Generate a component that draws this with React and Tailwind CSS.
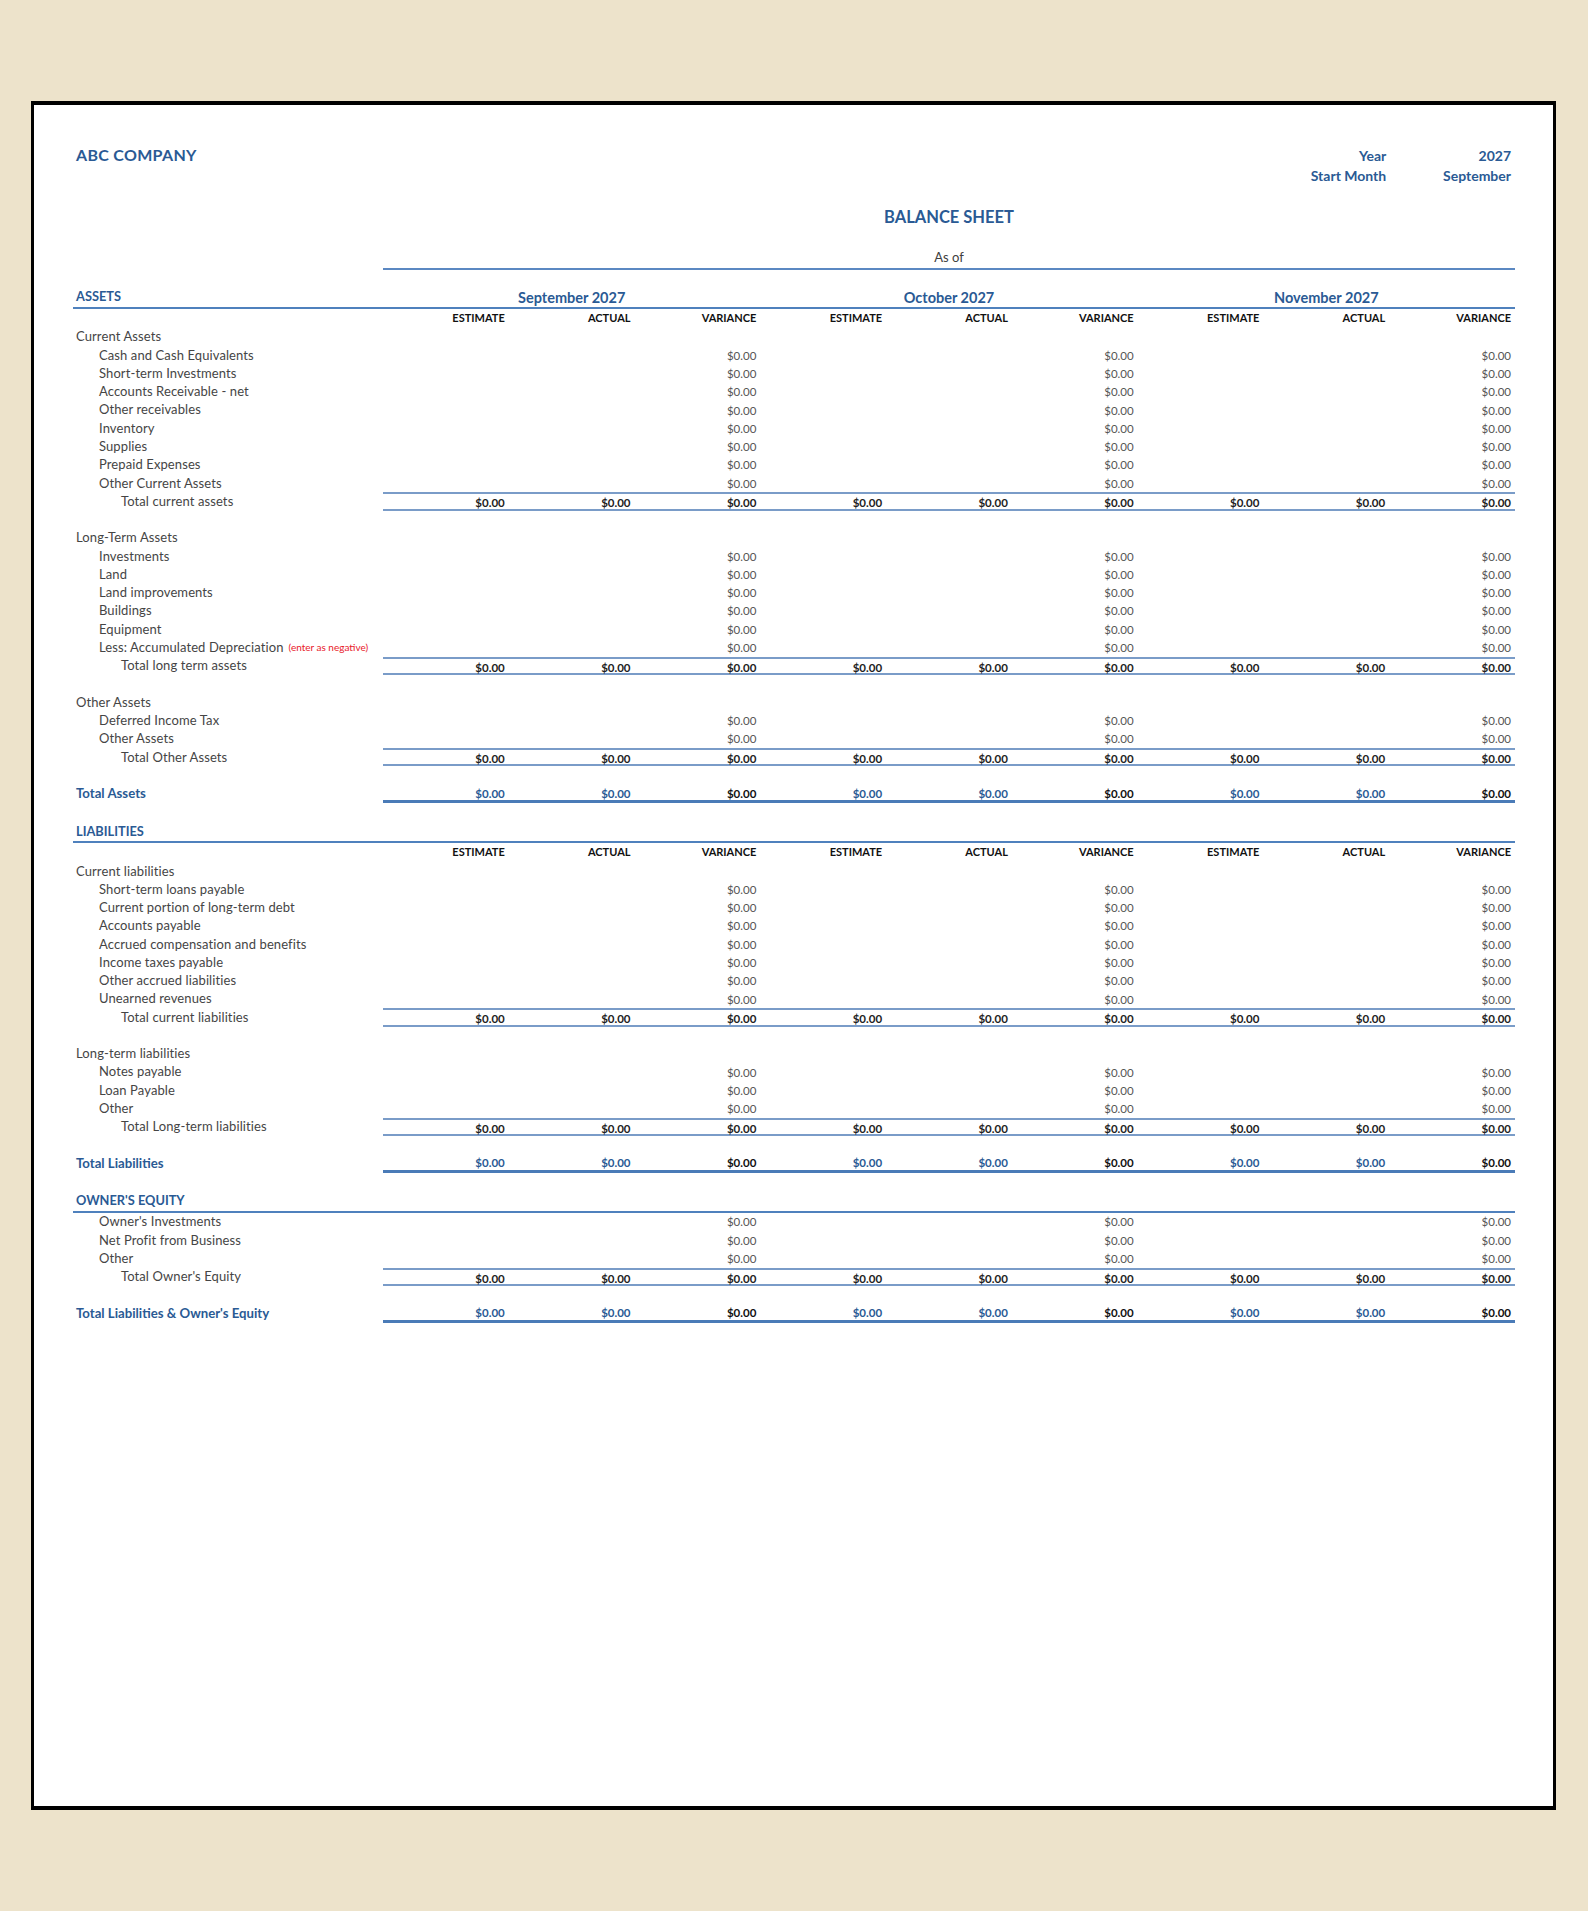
import React from "react";

const NINE = [0, 1, 2, 3, 4, 5, 6, 7, 8];
const HEAD = ["ESTIMATE", "ACTUAL", "VARIANCE"];

function Label({ children, level = 0, bold = false }) {
  const pad = level === 0 ? "pl-[3px]" : level === 1 ? "pl-[26px]" : "pl-[48px]";
  const style = bold
    ? "font-bold text-[#2a5a94] text-[13.2px]"
    : "text-[#454545] text-[13px] tracking-[0.1px]";
  return (
    <div className={`w-[310px] shrink-0 flex items-center whitespace-nowrap ${pad} ${style}`}>
      {children}
    </div>
  );
}

function ItemRow({ label, level = 1, note }) {
  return (
    <div className="flex h-[18.28px]">
      <Label level={level}>
        {label}
        {note && <span className="ml-[5px] text-[10px] tracking-normal text-[#e8202a]">{note}</span>}
      </Label>
      <div className="flex-1 grid grid-cols-9">
        {NINE.map((i) => (
          <div key={i} className="flex items-center justify-end pr-[4px] text-[11.5px] text-[#555555]">
            {i % 3 === 2 ? "$0.00" : ""}
          </div>
        ))}
      </div>
    </div>
  );
}

function TitleRow({ label }) {
  return (
    <div className="flex h-[18.28px]">
      <Label level={0}>{label}</Label>
      <div className="flex-1" />
    </div>
  );
}

function BlankRow() {
  return <div className="h-[18.28px]" />;
}

function TotalRow({ label }) {
  return (
    <div className="flex h-[18.28px]">
      <Label level={2}>{label}</Label>
      <div className="flex-1 grid grid-cols-9 border-t-2 border-b-2 border-[#7a9cc8]">
        {NINE.map((i) => (
          <div key={i} className="flex items-center justify-end pr-[4px] text-[11.5px] font-bold text-[#222222]">
            $0.00
          </div>
        ))}
      </div>
    </div>
  );
}

function GrandRow({ label }) {
  return (
    <div className="flex h-[18.28px]">
      <Label level={0} bold>
        {label}
      </Label>
      <div className="flex-1 grid grid-cols-9 border-b-[3px] border-[#4a7bb7]">
        {NINE.map((i) => (
          <div
            key={i}
            className={`flex items-center justify-end pr-[4px] text-[11.5px] font-bold ${
              i % 3 === 2 ? "text-[#111111]" : "text-[#2a5a94]"
            }`}
          >
            $0.00
          </div>
        ))}
      </div>
    </div>
  );
}

function SectionHeader({ title, months }) {
  return (
    <div className="flex h-[22px] border-b-2 border-[#4f81bd]">
      <div className="w-[310px] shrink-0 pl-[3px] flex items-center text-[12.8px] font-bold text-[#2a5a94]">
        {title}
      </div>
      <div className="flex-1 grid grid-cols-3">
        {months &&
          months.map((m) => (
            <div key={m} className="flex items-center justify-center text-[14.5px] font-bold text-[#2a5a94]">
              {m}
            </div>
          ))}
      </div>
    </div>
  );
}

function ColumnHeaderRow() {
  return (
    <div className="flex h-[19px]">
      <div className="w-[310px] shrink-0" />
      <div className="flex-1 grid grid-cols-9">
        {NINE.map((i) => (
          <div key={i} className="flex items-center justify-end pr-[4px] text-[11px] font-bold text-[#111111]">
            {HEAD[i % 3]}
          </div>
        ))}
      </div>
    </div>
  );
}

function Group({ title, items, total }) {
  return (
    <>
      {title && <TitleRow label={title} />}
      {items.map((it) =>
        typeof it === "string" ? (
          <ItemRow key={it} label={it} />
        ) : (
          <ItemRow key={it.label} label={it.label} note={it.note} />
        )
      )}
      <TotalRow label={total} />
    </>
  );
}

export default function App() {
  return (
    <div className="min-h-[1911px] w-[1588px] bg-[#ede3cb] pt-[101px] pl-[31px] font-['Lato',sans-serif]">
      <div className="w-[1525px] h-[1709px] bg-white border-x-[3px] border-y-4 border-black pt-[40px] pl-[39px] pr-[38px]">
        {/* Top header */}
        <div className="flex h-[20px]">
          <div className="w-[310px] shrink-0 pl-[3px] flex items-center text-[16px] font-bold tracking-[0.3px] text-[#2a5a94] whitespace-nowrap">
            ABC COMPANY
          </div>
          <div className="flex-1 grid grid-cols-9">
            <div className="col-start-8 flex items-center justify-end pr-[3px] text-[14px] font-bold text-[#2a5a94]">Year</div>
            <div className="col-start-9 flex items-center justify-end pr-[4px] text-[14px] font-bold text-[#2a5a94]">2027</div>
          </div>
        </div>
        <div className="flex h-[21px]">
          <div className="w-[310px] shrink-0" />
          <div className="flex-1 grid grid-cols-9">
            <div className="col-start-8 flex items-center justify-end pr-[3px] text-[14px] font-bold text-[#2a5a94] whitespace-nowrap">Start Month</div>
            <div className="col-start-9 flex items-center justify-end pr-[4px] text-[14px] font-bold text-[#2a5a94]">September</div>
          </div>
        </div>
        <div className="flex h-[24px] mt-[19px]">
          <div className="w-[310px] shrink-0" />
          <div className="flex-1 grid grid-cols-3">
            <div className="col-start-2 flex items-center justify-center text-[16.5px] font-bold text-[#2a5a94]">BALANCE SHEET</div>
          </div>
        </div>
        <div className="flex h-[22px] mt-[19px]">
          <div className="w-[310px] shrink-0" />
          <div className="flex-1 grid grid-cols-3 border-b-2 border-[#5b88c2]">
            <div className="col-start-2 flex items-center justify-center text-[13px] text-[#404040]">As of</div>
          </div>
        </div>

        {/* ASSETS */}
        <div className="mt-[17px]">
          <SectionHeader title="ASSETS" months={["September 2027", "October 2027", "November 2027"]} />
          <ColumnHeaderRow />
          <Group
            title="Current Assets"
            items={[
              "Cash and Cash Equivalents",
              "Short-term Investments",
              "Accounts Receivable - net",
              "Other receivables",
              "Inventory",
              "Supplies",
              "Prepaid Expenses",
              "Other Current Assets",
            ]}
            total="Total current assets"
          />
          <BlankRow />
          <Group
            title="Long-Term Assets"
            items={[
              "Investments",
              "Land",
              "Land improvements",
              "Buildings",
              "Equipment",
              { label: "Less: Accumulated Depreciation", note: "(enter as negative)" },
            ]}
            total="Total long term assets"
          />
          <BlankRow />
          <Group title="Other Assets" items={["Deferred Income Tax", "Other Assets"]} total="Total Other Assets" />
          <BlankRow />
          <GrandRow label="Total Assets" />
          <BlankRow />

          {/* LIABILITIES */}
          <SectionHeader title="LIABILITIES" />
          <ColumnHeaderRow />
          <Group
            title="Current liabilities"
            items={[
              "Short-term loans payable",
              "Current portion of long-term debt",
              "Accounts payable",
              "Accrued compensation and benefits",
              "Income taxes payable",
              "Other accrued liabilities",
              "Unearned revenues",
            ]}
            total="Total current liabilities"
          />
          <BlankRow />
          <Group
            title="Long-term liabilities"
            items={["Notes payable", "Loan Payable", "Other"]}
            total="Total Long-term liabilities"
          />
          <BlankRow />
          <GrandRow label="Total Liabilities" />
          <BlankRow />

          {/* OWNER'S EQUITY */}
          <SectionHeader title="OWNER'S EQUITY" />
          <Group items={["Owner's Investments", "Net Profit from Business", "Other"]} total="Total Owner's Equity" />
          <BlankRow />
          <GrandRow label="Total Liabilities & Owner's Equity" />
        </div>
      </div>
    </div>
  );
}
